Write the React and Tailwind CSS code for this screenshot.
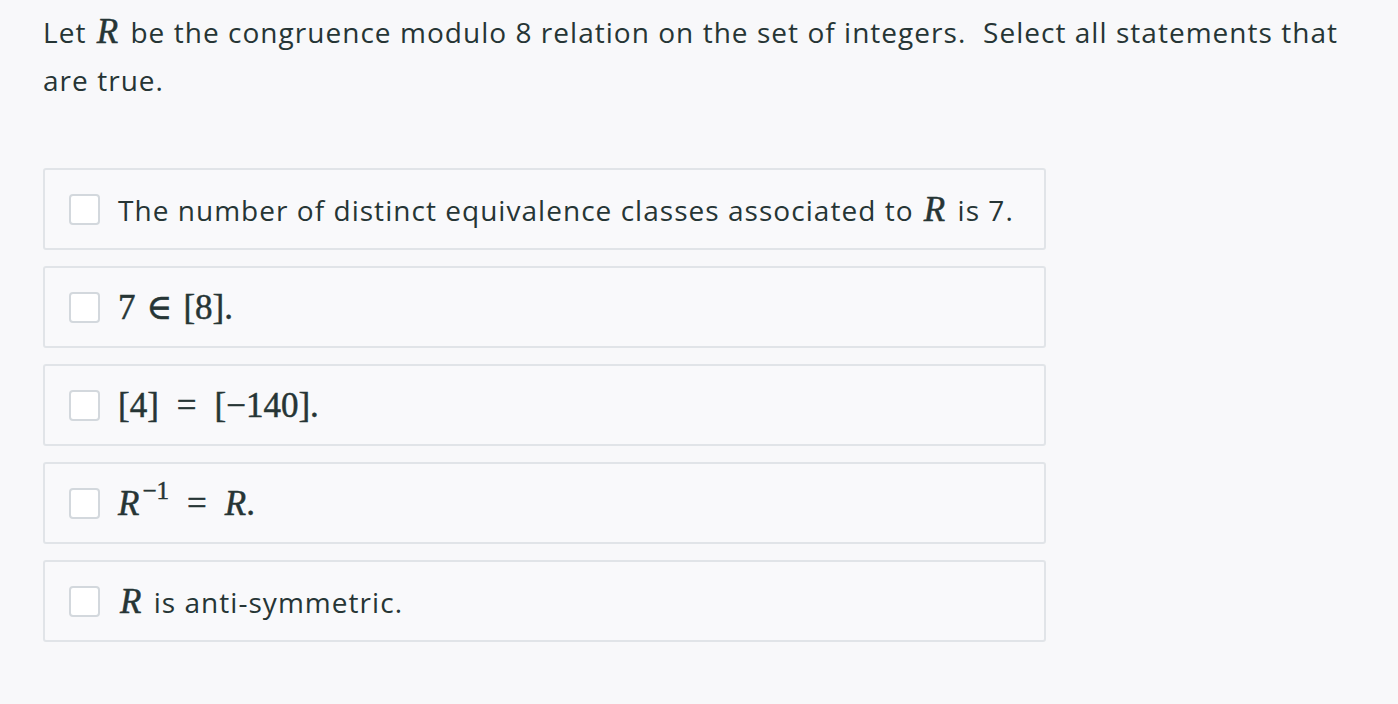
import React from 'react';

const sans = { fontFamily: '"Open Sans", "Lato", sans-serif' };

const M = ({ children, className = '' }) => (
  <span
    className={`text-[35px] leading-none tracking-normal [-webkit-text-stroke:0.5px_#263535] ${className}`}
    style={{ fontFamily: '"Liberation Serif", "DejaVu Serif", serif' }}
  >
    {children}
  </span>
);

const R = () => <M className="italic ml-[2px] mr-[4px]">R</M>;

const options = [
  <>The number of distinct equivalence classes associated to <R /> is 7.</>,
  <M>7<span className="mx-[11px]">∈</span>[8].</M>,
  <M>[4]<span className="mx-[18px]">=</span>[−140].</M>,
  <M><span className="italic">R</span><sup className="text-[25px] -top-[16px] ml-[3px]">−1</sup><span className="mx-[18px]">=</span><span className="italic">R</span>.</M>,
  <><R /> is anti-symmetric.</>,
];

export default function App() {
  return (
    <div className="min-h-screen w-full bg-[#f8f8fa] text-[#263535] px-[43px] pt-[8px]" style={sans}>
      <p className="text-[28px] tracking-[0.037em] leading-[48px] max-w-[1320px]">
        Let <R /> be the congruence modulo 8 relation on the set of integers.&nbsp; Select all statements that are true.
      </p>
      <div className="mt-[64px] w-[1003px] flex flex-col gap-[16px]">
        {options.map((opt, i) => (
          <label key={i} className="h-[82px] flex items-center gap-[18px] pl-[24px] border-2 border-[#e1e4e8] rounded-[3px] bg-[#f9f9fb]">
            <span className="w-[31px] h-[31px] shrink-0 border-2 border-[#d3d8dd] rounded-[4px] bg-white" />
            <span className="text-[28px] tracking-[0.037em] leading-none">{opt}</span>
          </label>
        ))}
      </div>
    </div>
  );
}
